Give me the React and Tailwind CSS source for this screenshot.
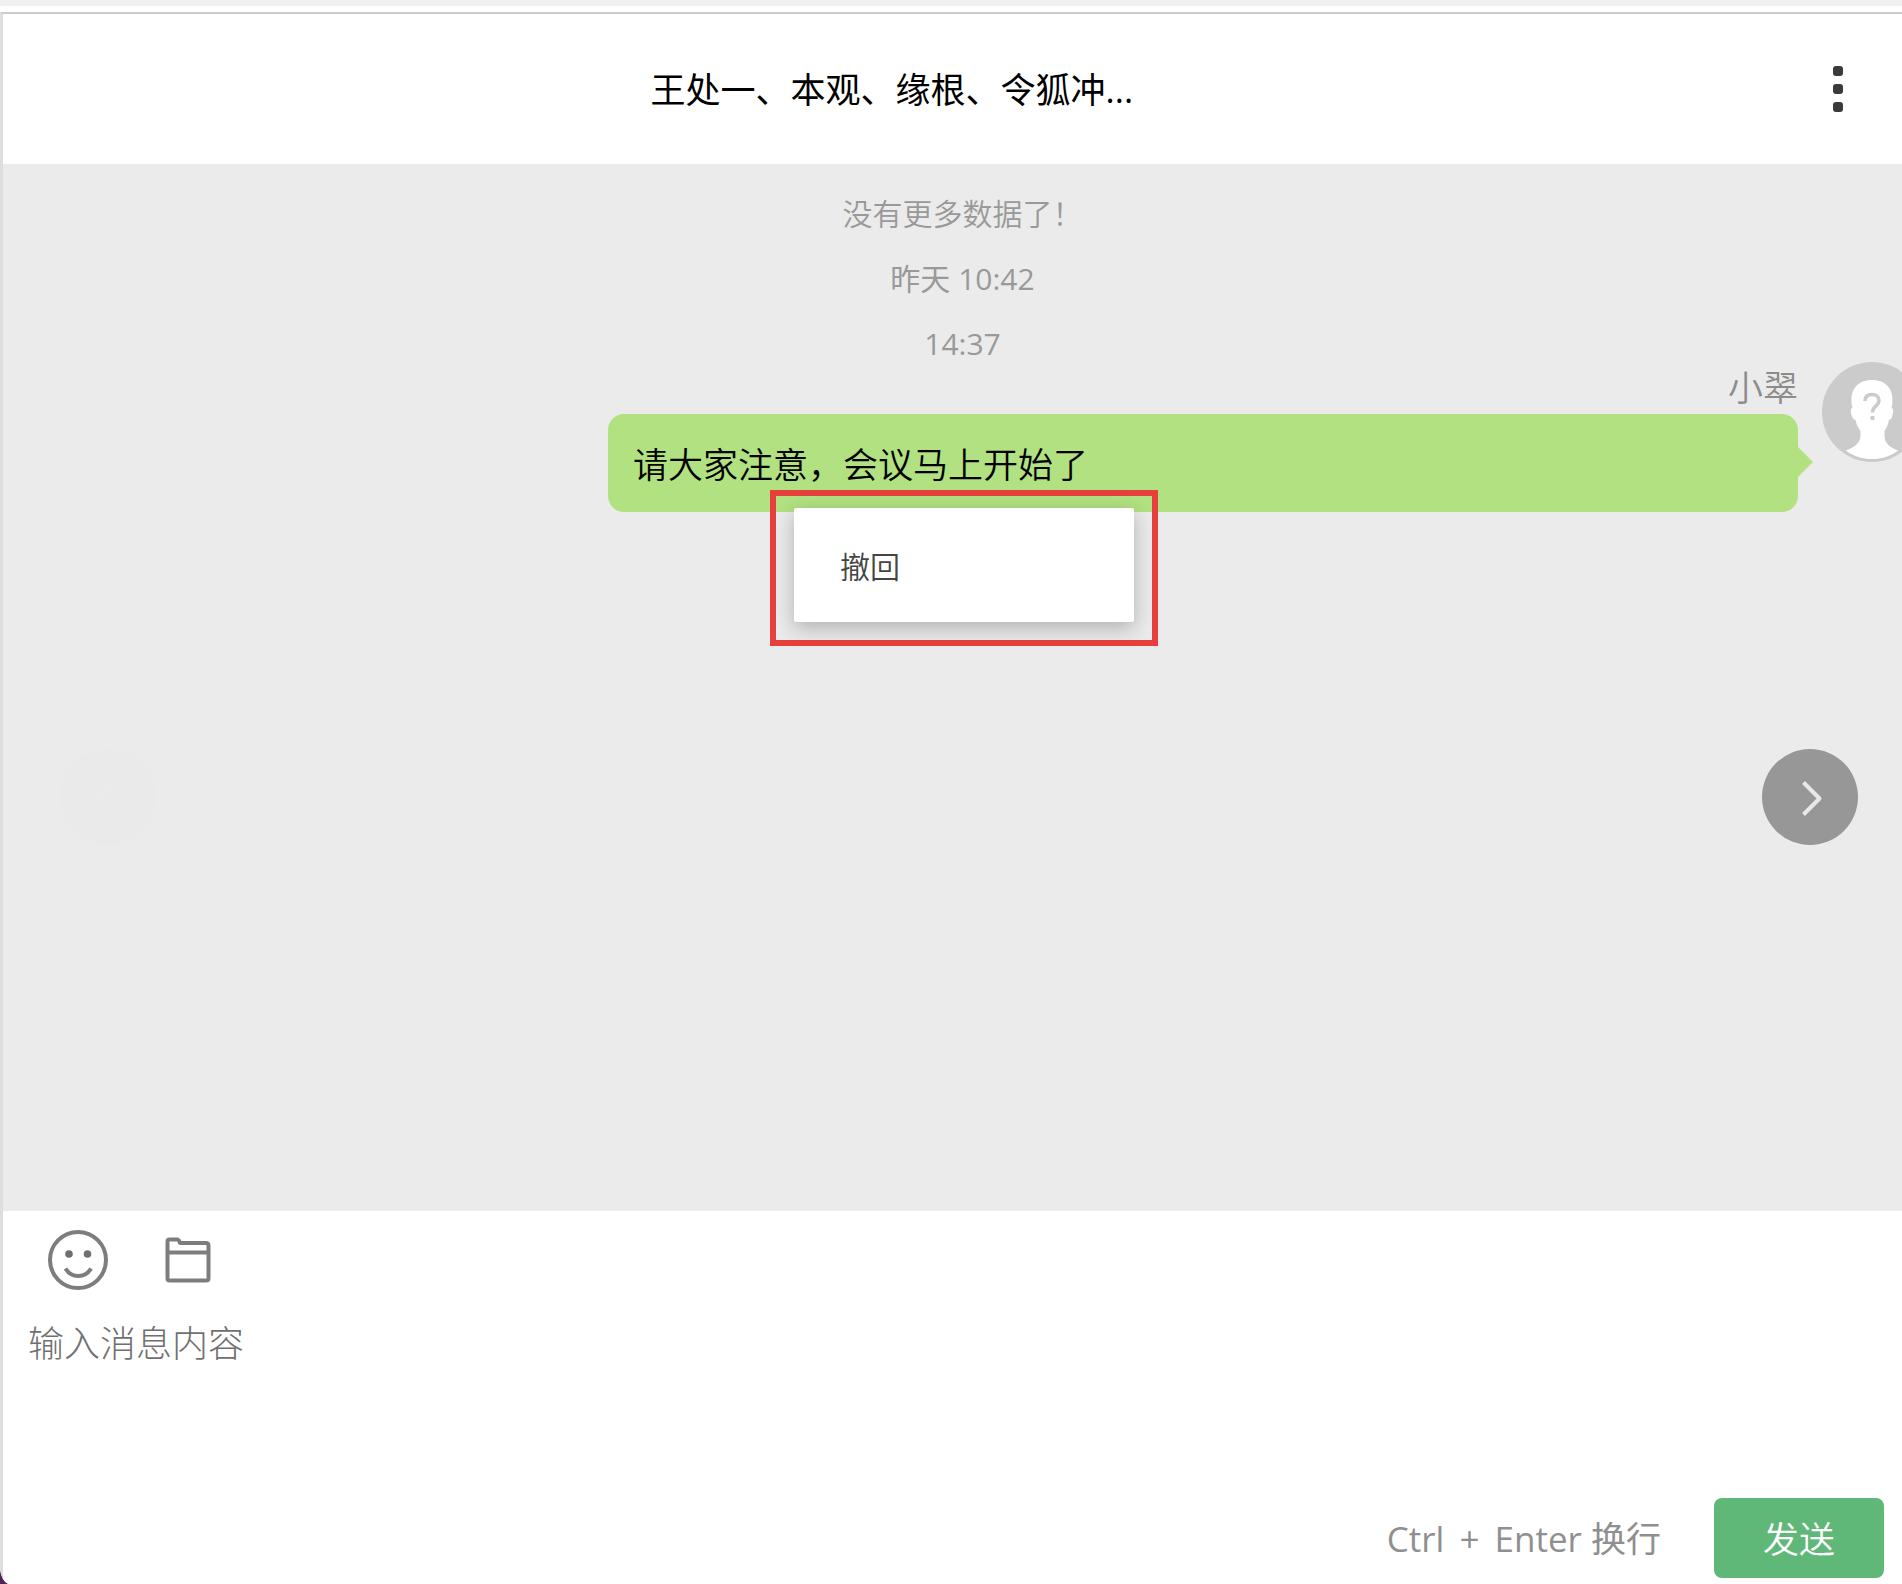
const latinCjk =
  'font-["Open_Sans","Noto_Sans_CJK_SC",sans-serif]';

function SmileIcon() {
  return (
    <svg viewBox="0 0 60 60" className="size-[60px]" fill="none" stroke="#7d7d7d" aria-hidden="true">
      <circle cx="30" cy="30" r="28" strokeWidth="4" />
      <circle cx="21" cy="24" r="3.8" fill="#6f6f6f" stroke="none" />
      <circle cx="39.5" cy="24" r="3.8" fill="#6f6f6f" stroke="none" />
      <path d="M17.500 38.500c3 5 7.500 7.500 12.700 7.500s9.800-2.500 12.800-7.500" strokeWidth="4" />
    </svg>
  );
}

function FolderIcon() {
  return (
    <svg viewBox="0 0 46 46" className="size-[46px]" fill="none" stroke="#7d7d7d" strokeWidth="4" strokeLinejoin="round" aria-hidden="true">
      <path d="M2.500 42V4.500Q2.500 2.500 4.500 2.500H12Q14 2.500 15 6H41Q43.500 6 43.500 8.500V41.500Q43.500 43.500 41 43.500H4.500Q2.500 43.500 2.500 41.500" />
      <path d="M3 15.500H43" />
    </svg>
  );
}

function Avatar() {
  return (
    <svg viewBox="0 0 100 100" className="size-[100px] shrink-0" role="img" aria-label="小翠">
      <circle cx="50" cy="50" r="50" fill="#cbcbcb" />
      <path
        fill="#fff"
        d="M50 18C36 18 29 27 29.500 39C29.500 42 30 44 30.500 46C28.500 46 28.500 49 29.500 53C30.500 56.500 31.500 57.500 33.500 58C34.500 63 36.500 66 38.500 69V73C38.500 80 34 85 24 88.500C31 94.500 41 97 50 97S69 94.500 76 88.500C66 85 62.500 80 62.500 73V69C64.500 66 66 63 67 58C69 57.500 69.500 56.500 70.500 53C71.500 49 71.500 46 69.500 46C70 44 70.500 42 70.500 39C71 27 64 18 50 18Z"
      />
      <path d="M43 39C43 34 46 32.500 50 32.500C54 32.500 57 35 57 38.500C57 44 50.500 44 50.500 50.500" fill="none" stroke="#cbcbcb" strokeWidth="3.600" />
      <circle cx="50.500" cy="56" r="2.300" fill="#cbcbcb" />
    </svg>
  );
}

function Header() {
  return (
    <header className="relative flex h-[150px] items-center justify-center bg-white">
      <h1 className="w-[620px] truncate pt-0.5 pl-2 text-[35px] leading-[48px] text-black">王处一、本观、缘根、令狐冲...</h1>
      <button type="button" aria-label="更多" className="absolute right-[51px] flex flex-col gap-2 p-2">
        <span className="size-2.5 rounded-[3px] bg-[#3a3a3a]" />
        <span className="size-2.5 rounded-[3px] bg-[#3a3a3a]" />
        <span className="size-2.5 rounded-[3px] bg-[#3a3a3a]" />
      </button>
    </header>
  );
}

function Message() {
  return (
    <article className="-mr-5 flex items-start justify-end gap-6">
      <div className="w-[1190px]">
        <p className="h-[52px] text-right text-[35px] leading-[52px] text-[#8c8c8c]">小翠</p>
        <div className="relative rounded-2xl bg-[#b1e180] px-[25px] pt-6 pb-5">
          <p className="text-[35px] leading-[54px] text-black">请大家注意，会议马上开始了</p>
          <span className="absolute top-8 -right-[15px] h-8 w-4 bg-[#b1e180] [clip-path:polygon(0_0,100%_50%,0_100%)]" />
          <div className="absolute top-[76px] left-[162px] w-[388px] border-[6px] border-[#e6403d] px-[18px] pt-3 pb-[18px]">
            <ul role="menu" className="rounded-xs bg-white shadow-[0_6px_20px_rgba(0,0,0,0.25)]">
              <li role="none">
                <button type="button" role="menuitem" className="block w-full px-[46px] pt-[41px] pb-[37px] text-left text-[30px] leading-[36px] text-[#444]">
                  撤回
                </button>
              </li>
            </ul>
          </div>
        </div>
      </div>
      <Avatar />
    </article>
  );
}

function Conversation() {
  return (
    <main className="relative flex-1 bg-[#ebebeb] pt-8 font-[350]">
      <div className="flex flex-col items-center gap-[29px] pl-5 text-[30px] leading-[36px] text-[#999]">
        <p>没有更多数据了！</p>
        <p className="font-normal">昨天 10:42</p>
        <p className="font-normal">14:37</p>
      </div>
      <Message />
      <button type="button" aria-label="上一张" className="absolute top-[585px] left-[57px] flex size-24 items-center justify-center rounded-full bg-[#eaeaea]">
        <svg viewBox="0 0 96 96" className="size-24" fill="none" stroke="#ebebeb" strokeWidth="4" strokeLinejoin="round" aria-hidden="true">
          <path d="M54.500 33.500L38.500 49.500L54.500 65.500" />
        </svg>
      </button>
      <button type="button" aria-label="下一张" className="absolute top-[585px] right-[44px] flex size-24 items-center justify-center rounded-full bg-[#979797]">
        <svg viewBox="0 0 96 96" className="size-24" fill="none" stroke="#e8e8e8" strokeWidth="4" strokeLinejoin="round" aria-hidden="true">
          <path d="M41.500 33.500L57.500 49.500L41.500 65.500" />
        </svg>
      </button>
    </main>
  );
}

function Composer() {
  return (
    <footer className="bg-white pr-[18px] pb-1.5 pl-[25px]">
      <div className="flex items-center gap-[57px] px-5 pt-[19px]">
        <button type="button" aria-label="表情"><SmileIcon /></button>
        <button type="button" aria-label="文件"><FolderIcon /></button>
      </div>
      <textarea
        aria-label="输入消息内容"
        placeholder="输入消息内容"
        className="mt-[30px] block h-[178px] w-full resize-none text-[36px] leading-[48px] font-light outline-none placeholder:text-[#707070]"
      />
      <div className="flex items-center justify-end gap-[53px]">
        <p className="pt-0.5 text-[35px] leading-[48px] text-[#8f8f8f]">
          Ctrl <span className="mx-1.5">+</span> Enter 换行
        </p>
        <button type="button" className="h-20 w-[170px] rounded-lg bg-[#5fb878] pt-1 text-[36px] leading-[48px] font-[350] text-white">发送</button>
      </div>
    </footer>
  );
}

export default function App() {
  return (
    <div className={`min-h-screen overflow-hidden bg-[#54205c] ${latinCjk}`}>
      <div className="flex min-h-screen flex-col overflow-hidden rounded-bl-[10px_18px] bg-white">
        <div className="h-1.5 bg-[#f0f0f0]" />
        <div className="mt-1.5 flex flex-1 flex-col border-t-2 border-l-[3px] border-t-[#cbcbcb] border-l-[#dedede]">
          <Header />
          <Conversation />
          <Composer />
        </div>
      </div>
    </div>
  );
}
